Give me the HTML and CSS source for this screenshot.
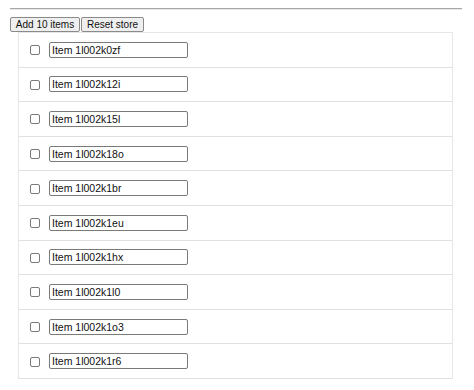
FILE: index.html
```html
<!DOCTYPE html>
<html>
<head>
<meta charset="utf-8">
<link rel="stylesheet" href="styles.css">
</head>
<body>
<hr class="rule">
<div class="toolbar">
  <button class="btn btn-add">Add 10 items</button>
  <button class="btn btn-reset">Reset store</button>
</div>
<div class="list">
  <div class="row"><input type="checkbox" class="check"><input class="field" type="text" value="Item 1l002k0zf"></div>
  <div class="row"><input type="checkbox" class="check"><input class="field" type="text" value="Item 1l002k12i"></div>
  <div class="row"><input type="checkbox" class="check"><input class="field" type="text" value="Item 1l002k15l"></div>
  <div class="row"><input type="checkbox" class="check"><input class="field" type="text" value="Item 1l002k18o"></div>
  <div class="row"><input type="checkbox" class="check"><input class="field" type="text" value="Item 1l002k1br"></div>
  <div class="row"><input type="checkbox" class="check"><input class="field" type="text" value="Item 1l002k1eu"></div>
  <div class="row"><input type="checkbox" class="check"><input class="field" type="text" value="Item 1l002k1hx"></div>
  <div class="row"><input type="checkbox" class="check"><input class="field" type="text" value="Item 1l002k1l0"></div>
  <div class="row"><input type="checkbox" class="check"><input class="field" type="text" value="Item 1l002k1o3"></div>
  <div class="row"><input type="checkbox" class="check"><input class="field" type="text" value="Item 1l002k1r6"></div>
</div>
</body>
</html>
```
FILE: styles.css
```css
html, body {
  margin: 0;
  background: #ffffff;
}
body {
  padding: 0 12px 0 10px;
  font-family: "Liberation Sans", Arial, sans-serif;
  font-size: 10.5px;
  color: #000;
}
.rule {
  margin: 8px 0 7px 0;
  height: 0;
  border: 0;
  border-top: 1px solid #a8a8a8;
  border-bottom: 1px solid #e8e8e8;
}
.toolbar {
  display: flex;
  gap: 1px;
}
.btn {
  box-sizing: border-box;
  height: 15px;
  margin: 0;
  padding: 0;
  white-space: nowrap;
  font-family: "Liberation Sans", Arial, sans-serif;
  font-size: 10px;
  line-height: 13px;
  color: #111;
  background: #efefef;
  border: 1px solid #8a8a8a;
  border-radius: 2px;
}
.btn-add {
  width: 70px;
}
.btn-reset {
  width: 63px;
}
.list {
  margin: 0 9px 0 8px;
  border: 1px solid #e6e6e6;
  border-bottom: 0;
}
.row {
  box-sizing: border-box;
  height: 34.6px;
  display: flex;
  align-items: center;
  gap: 9px;
  padding-left: 11px;
  border-bottom: 1px solid #e0e0e0;
}
.check {
  appearance: none;
  -webkit-appearance: none;
  box-sizing: border-box;
  width: 10px;
  height: 10px;
  margin: 1px 0 0 0;
  border: 1px solid #7a7a7a;
  border-radius: 2px;
  background: #fff;
}
.field {
  box-sizing: border-box;
  width: 139px;
  height: 16px;
  margin: 0;
  padding: 0 2px;
  font-family: "Liberation Sans", Arial, sans-serif;
  font-size: 10.5px;
  color: #111;
  border: 1px solid #7a7a7a;
  border-radius: 2px;
  background: #fff;
}
```
